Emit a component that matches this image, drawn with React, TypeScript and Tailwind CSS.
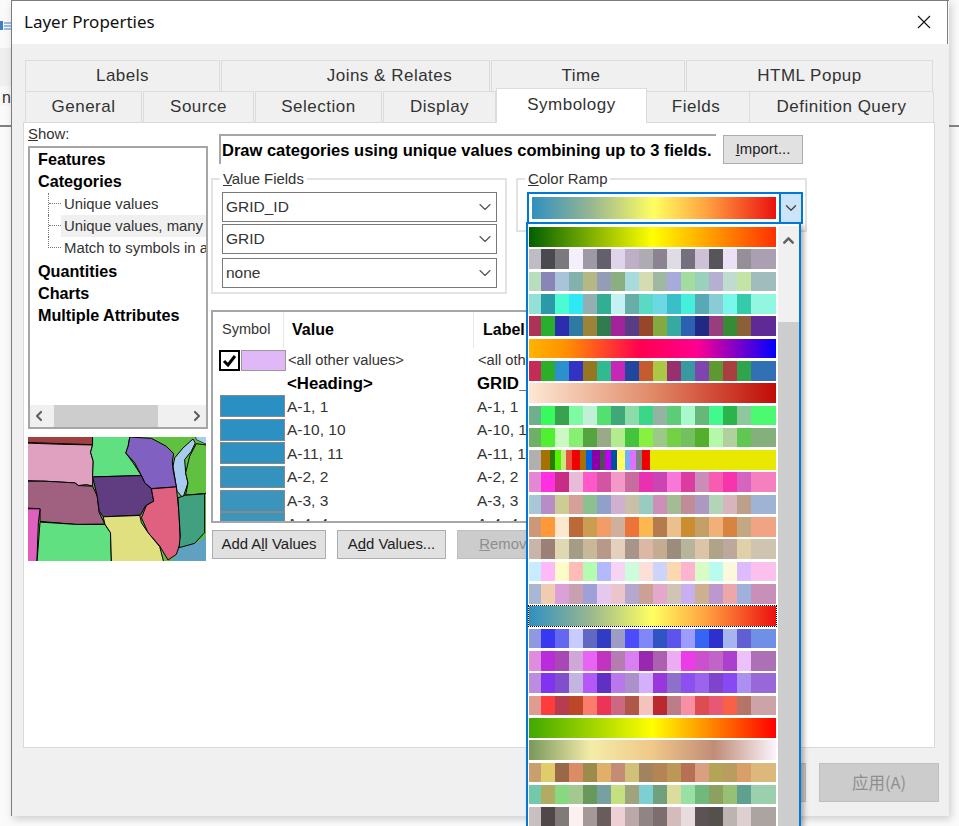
import { ChevronDown, ChevronLeft, ChevronRight, ChevronUp } from "lucide-react";

const ramps: (string[] | string)[] = [
  "linear-gradient(90deg,#006000,#ffff00 50%,#ff3000)",
  ["#c0bcc6","#4b4950","#7b787e","#f4effb","#9f99a5","#635f6b","#e0d4ea","#bdafc5","#aeabb2","#8b8292","#e0dce6","#76707e","#cdc1d6","#57545a","#ece1f4","#958f98","#aaa0b1"],
  ["#b8dfbd","#8985b6","#a9c3da","#83b1ab","#b4b983","#949cb6","#8ab081","#a9dbde","#d6dcb2","#9eb9a0","#a6aadc","#a2dc9e","#9ad1bc","#b5b0d2","#bfdcd0","#c5e2a7","#a1bcbc"],
  ["#93e1d6","#2b9aa8","#4cfbd3","#2ee8f4","#93afb1","#33ae94","#c5f0f4","#68ada8","#5ad9c3","#6bd8e4","#3abfc8","#44f0db","#57aab5","#8accd6","#78f7ea","#33cbaa","#92f7e0"],
  ["#ae3358","#2aae30","#2d2cae","#2e7aa3","#9d823a","#317c4f","#a3239a","#583c84","#96472a","#82aa40","#36a9a0","#2c60b0","#202a84","#983e7e","#368a38","#8a6038","#5f2a96"],
  "linear-gradient(90deg,#ffb400,#ff9000 15%,#ff0050 45%,#ff0090 68%,#0000ff)",
  ["#c42c58","#2cae28","#2c90cc","#3232c4","#96761e","#30ba8e","#c428b4","#2046a0","#c45c30","#aac844","#983070","#369aa0","#8044b0","#5e9830","#aa3e40","#30a44c","#3270b4"],
  "linear-gradient(90deg,#fde8d4,#e08a68 50%,#c00c06)",
  ["#6eb08c","#38fa5e","#38a24e","#7efaa2","#c2f0d6","#52e070","#3ea878","#8cdcaa","#38d888","#92b4a0","#5ccc76","#a8f8cc","#66b878","#40fa8e","#2cb44c","#8cc89c","#4cfa72"],
  ["#6eb068","#50f030","#ccf8c4","#88f070","#54a440","#98aa88","#b2ec8c","#44c43c","#88f040","#9cc888","#74d044","#74c060","#54b02c","#b4f8a8","#b0d0a0","#60c850","#84b07c"],
  "mixed",
  ["#e288d4","#ff30e0","#c82c84","#e8bcd8","#ff58c8","#d454a4","#f498c8","#c86ca0","#e830b0","#cc44b4","#f878d8","#dc3ca0","#cc8cb8","#f85cb0","#f834ac","#d464c0","#f480c0"],
  ["#a8c8d8","#b88cc4","#cccc94","#d4a098","#8cc090","#90a0c8","#d0b0d0","#c8c0a8","#98ccc0","#cc90b8","#a4bc94","#c08c98","#ac98c0","#b4d4b8","#d8b4bc","#bca08c","#9fb4d4"],
  ["#cc9878","#ff9838","#fce8cc","#bc6838","#cc9c50","#f49c68","#d0b09c","#ec7438","#fcb850","#b47c4c","#ecc08c","#cc8c30","#c4a068","#f0b078","#d88440","#c4a884","#f0a484"],
  ["#c8b4a8","#9c8078","#e0d8b0","#a49c84","#c8b898","#b89888","#e4d0bc","#a89488","#dcb8a4","#c4ac90","#9c8c7c","#b8b49c","#dcc4a8","#b0a488","#bca89c","#e0d0a8","#cec4b0"],
  ["#c8ecff","#ffb8f8","#fcfcc8","#ffbcb4","#b4fcb0","#b4b8fc","#f8d4f4","#ccfcdc","#fce0d8","#ccd4fc","#fcd8b0","#fcb4d0","#d8fcc4","#b8fcf0","#fcf8dc","#dcbcfc","#fcc0ec"],
  ["#a8b8d4","#f0ccb0","#dca0d8","#c8a0b0","#a0a0d8","#e4c8f0","#ecc4cc","#b4a8cc","#cca094","#e4a8cc","#d0c4b4","#c8b0f0","#ccb090","#bc98cc","#eca8a8","#a0b0dc","#c890b8"],
  "selected",
  ["#9098e4","#3838f0","#6468f0","#c8ccfc","#6068c4","#303cc4","#9c9cc4","#4c4cfc","#8088f8","#3054c4","#5c54ec","#9c9cfc","#3864f4","#2c30cc","#a8b4f0","#6060d4","#7090e8"],
  ["#e08cdc","#b82cdc","#a848b4","#d0a8d8","#e864f4","#c034c0","#b47cb0","#d880f0","#9828b0","#ac60b0","#ecacf4","#ec3ce8","#cc50cc","#c064c8","#ac40cc","#ecc0f8","#ac70b4"],
  ["#bc8ce0","#8034f0","#8050cc","#c4b4e0","#b458f8","#6030c4","#b878ec","#ac90cc","#d4b0fc","#9838dc","#8c70cc","#8c50f0","#9c64ec","#8044cc","#8848f4","#ac90f0","#9868d8"],
  ["#e09c90","#ff3c3c","#b83c50","#bc4828","#fc7c6c","#ec3454","#cc6880","#b05848","#f4c4bc","#bc2830","#bc7c88","#f890a4","#dc4c50","#e85874","#f86048","#b47468","#cca4a8"],
  "linear-gradient(90deg,#40a800,#ffff00 50%,#ff0000)",
  "linear-gradient(90deg,#78985c,#f4eca8 25%,#f0c888 50%,#c08c78 75%,#fcf4fc)",
  ["#c8a070","#e0cc68","#986848","#dc8c64","#9c8c4c","#e0b068","#c48c74","#d0c078","#a08460","#b48454","#bc9858","#b87054","#d8a080","#b4a458","#b89c60","#d8a068","#dcb87c"],
  ["#74c8ac","#b0ac64","#88d880","#a4c890","#68985c","#78a0a0","#c4e080","#a0a47c","#7cd0d4","#70a07c","#dcdc9c","#98e0a4","#70b87c","#8ca060","#98c074","#60a090","#9cd0ac"],
  ["#c8c0c0","#504848","#807a78","#fcf0f0","#a49898","#685c5c","#ecd0d4","#bca8a8","#908484","#7c6e6e","#d4bcbc","#e8dcdc","#5c5454","#54504c","#bcb4b0","#ded0d0","#aca4a0"],
];

const mixed: [string, number][] = [
  ["#b0b0b0",37],["#a87000",25],["#2a7c00",17],["#54f000",17],["#c8e880",16],["#e85040",17],["#f00000",25],["#a87000",16],["#0060e0",18],["#8c00a8",25],["#505050",16],["#c000f0",17],["#0050a8",17],["#ffff60",25],["#70b0ff",16],["#e070ff",17],["#808080",17],["#f00000",25],["#e8e800",377],
];

const selectedGradient = "linear-gradient(90deg,#3090c0,#9ab890 25%,#ffff60 50%,#ffa040 72%,#ec1010)";

const blues = ["#2a90c4", "#2c90c3", "#2f91c2", "#3492bf", "#3a94bc", "#3e95ba"];
const tableRows = ["A-1, 1", "A-10, 10", "A-11, 11", "A-2, 2", "A-3, 3"];

function Ramp({ ramp }: { ramp: string[] | string }) {
  if (ramp === "mixed") {
    return (
      <div className="flex h-[19.67px]">
        {mixed.map(([c, g], i) => (
          <div key={i} style={{ background: c, flexGrow: g, flexBasis: 0 }} />
        ))}
      </div>
    );
  }
  if (ramp === "selected") {
    return <div className="h-[19.67px] outline-1 outline-dotted outline-black" style={{ background: selectedGradient }} />;
  }
  if (typeof ramp === "string") {
    return <div className="h-[19.67px]" style={{ background: ramp }} />;
  }
  return (
    <div className="grid h-[19.67px] grid-cols-[12.3px_repeat(15,14px)_25px]">
      {ramp.map((c, i) => (
        <div key={i} style={{ background: c }} />
      ))}
    </div>
  );
}

function Select({ value }: { value: string }) {
  return (
    <div className="flex h-[30px] w-[275px] items-center justify-between border-[1.5px] border-[#7a7a7a] bg-white pl-[3px] pr-[1px] text-[15.5px] text-[#333]">
      <span>{value}</span>
      <ChevronDown size={20} strokeWidth={1.4} className="text-[#555]" />
    </div>
  );
}

function Btn({ w, disabled, children }: { w: string; disabled?: boolean; children: React.ReactNode }) {
  return (
    <div className={`flex h-[29px] shrink-0 items-center justify-center border-[1.5px] text-[14.9px] ${w} ${disabled ? "border-[#bfbfbf] bg-[#cccccc] text-[#8f8f8f]" : "border-[#adadad] bg-[#e1e1e1] text-[#222]"}`}>
      {children}
    </div>
  );
}

function Tab({ w, extra, children }: { w: string; extra?: string; children: React.ReactNode }) {
  return (
    <div className={`flex shrink-0 items-center justify-center border-x border-t border-[#dcdcdc] text-[17px] tracking-[0.5px] ${w} ${extra ?? ""}`}>
      {children}
    </div>
  );
}

function TreeChild({ label, last, active }: { label: string; last?: boolean; active?: boolean }) {
  return (
    <div className="flex h-[22.33px] pl-[18px]">
      <div className={`w-[13px] shrink-0 ${last ? "" : "border-l border-dotted border-[#777]"}`}>
        <div className={`h-1/2 w-full border-b border-dotted border-[#777] ${last ? "border-l" : ""}`} />
      </div>
      <div className={`flex min-w-0 flex-1 items-center overflow-hidden whitespace-nowrap pl-[3px] text-[14.9px] text-[#333] ${active ? "bg-[#f0f0f0]" : ""}`}>{label}</div>
    </div>
  );
}

function TreeHead({ label }: { label: string }) {
  return <div className="flex h-[22.33px] items-center pl-[8px] text-[16.2px] font-bold text-black">{label}</div>;
}

function UsMap() {
  return (
    <svg viewBox="24 22 535 373" className="mt-[8px] block h-[124px] w-[178px]" stroke="#000" strokeWidth="3" strokeLinejoin="round">
      <rect x="24" y="22" width="535" height="373" fill="#60c040" stroke="none" />
      <path d="M525 10L575 10L575 45L556 42L530 30Z" fill="#a8ccf0" strokeWidth="2" />
      <path d="M520 28L527 40L515 65L495 90L498 130L505 160L490 205L472 185L460 110L465 85L490 55Z" fill="#a8ccf0" />
      <path d="M10 10L218 10L218 45L125 42L10 38Z" fill="#a04040" />
      <path d="M10 40L125 44L218 46L212 68L220 95L218 170L200 165L175 168L165 160L75 155L10 153Z" fill="#e0a0c0" />
      <path d="M218 10L332 10L325 50L318 70L340 100L365 138L218 142L220 95L212 68L218 46Z" fill="#60e080" />
      <path d="M330 22L395 26L440 50L462 72L458 95L460 120L470 172L395 177L375 160L365 138L345 100L318 70L325 50Z" fill="#8060c0" />
      <path d="M575 190L498 197L505 160L498 130L510 80L530 42L575 48Z" fill="#60c040" />
      <path d="M10 155L75 155L165 160L175 168L218 170L232 200L238 250L255 284L170 285L60 276L60 238L10 235Z" fill="#a06080" />
      <path d="M218 142L365 138L375 160L395 178L402 215L378 228L362 257L250 262L238 245L232 200Z" fill="#603c80" />
      <path d="M575 310L575 410L445 410L470 375L480 355L530 340Z" fill="#60a0c0" stroke="none" />
      <path d="M395 178L470 172L478 250L482 340L470 375L445 392L420 350L385 310L365 265L380 228L402 215Z" fill="#e06080" />
      <path d="M475 205L498 197L555 193L555 310L525 342L478 355L482 320Z" fill="#40a080" />
      <path d="M10 238L60 238L55 280L50 410L10 410Z" fill="#e060c0" />
      <path d="M60 278L170 285L255 285L272 310L275 410L50 410Z" fill="#60e080" />
      <path d="M250 262L360 258L365 280L385 310L420 352L435 410L275 410L272 310L255 284Z" fill="#e0e080" />
    </svg>
  );
}

export default function App() {
  return (
    <div className="flex h-[826px] w-[959px] overflow-hidden bg-[#fafafa] font-['Liberation_Sans',sans-serif]">
      <div className="flex h-[127px] w-[11px] shrink-0 flex-col border-b-2 border-[#808080]">
        <div className="h-[19px]" />
        <div className="h-[16px] overflow-hidden">
          <svg width="11" height="16" viewBox="0 0 11 16">
            <rect x="0" y="2" width="3" height="9" fill="#3d7fc9" />
            <path d="M4 4H11M4 7H11M4 10H11" stroke="#3d7fc9" strokeWidth="1.2" />
          </svg>
        </div>
        <div className="h-[13px]" />
        <div className="h-[38px] bg-[#efefef]" />
        <div className="flex h-[20px] justify-end overflow-hidden bg-[#f6f6f6] text-[16px] leading-[24px] text-[#333]">n</div>
      </div>

      <div className="h-[816px] w-[938px] shrink-0 border-l border-t border-[#7c7c7c] shadow-[2px_3px_8px_rgba(0,0,0,0.18)]">
        <div className="flex h-[43px] w-[936px] items-center justify-between border-r border-[#7c7c7c] bg-white pb-[2px] pl-[12px] pr-[16px]">
          <span className="font-['Noto_Sans',sans-serif] text-[17px] text-[#111]">Layer Properties</span>
          <svg width="14" height="14" viewBox="0 0 14 14" stroke="#111" strokeWidth="1.1">
            <path d="M1 1L13 13M13 1L1 13" />
          </svg>
        </div>

        <div className="h-[772px] bg-[#f0f0f0] pl-[11px] pt-[16px]">
          <div className="ml-[2px] flex h-[31px] gap-[1px] text-[#333]">
            <Tab w="w-[195px]">Labels</Tab>
            <Tab w="w-[269px]" extra="pl-[68px]">Joins &amp; Relates</Tab>
            <Tab w="w-[194px]" extra="pr-[14px]">Time</Tab>
            <Tab w="w-[247px]">HTML Popup</Tab>
          </div>
          <div className="relative z-10 ml-[2px] flex h-[31px] text-[#333]">
            <Tab w="w-[117px]" extra="mr-[1px]">General</Tab>
            <Tab w="w-[111px]" extra="mr-[1px]">Source</Tab>
            <Tab w="w-[127px]" extra="mr-[1px]">Selection</Tab>
            <Tab w="w-[113px]" extra="">Display</Tab>
            <Tab w="w-[151px]" extra="-mt-[3px] h-[35px] bg-white pb-[3px]">Symbology</Tab>
            <Tab w="w-[103px]" extra="border-l-0 pr-[4px]">Fields</Tab>
            <Tab w="w-[184px]" extra="border-l-0">Definition Query</Tab>
          </div>

          <div className="flex h-[626px] w-[912px] border border-[#d9d9d9] bg-white pl-[4px]">
            <div className="w-[180px] shrink-0">
              <div className="flex h-[23px] items-center text-[14.9px] text-[#333]"><span><u>S</u>how:</span></div>
              <div className="flex h-[283px] flex-col border-2 border-[#a6a6a6]">
                <div className="flex-1">
                  <TreeHead label="Features" />
                  <TreeHead label="Categories" />
                  <TreeChild label="Unique values" />
                  <TreeChild label="Unique values, many" active />
                  <TreeChild label="Match to symbols in a" last />
                  <TreeHead label="Quantities" />
                  <TreeHead label="Charts" />
                  <TreeHead label="Multiple Attributes" />
                </div>
                <div className="flex h-[22px] items-center justify-between bg-[#f0f0f0] px-[1px] text-[#606060]">
                  <ChevronLeft size={16} strokeWidth={3.2} />
                  <div className="ml-[7px] mr-auto h-full w-[104px] bg-[#cdcdcd]" />
                  <ChevronRight size={16} strokeWidth={3.2} />
                </div>
              </div>
              <UsMap />
            </div>

            <div className="ml-[3px] flex-1">
              <div className="ml-[8px] mt-[11px] flex">
                <div className="flex h-[30px] w-[497px] items-center overflow-hidden whitespace-nowrap border-l-2 border-t-2 border-[#a6a6a6] pl-[1px] text-[16.5px] font-bold text-black">Draw categories using unique values combining up to 3 fields.</div>
                <div className="ml-[7px] mt-[1px]"><Btn w="w-[80px]"><span><u>I</u>mport...</span></Btn></div>
              </div>
              <div className="mt-[7px] flex">
                <fieldset className="h-[123px] w-[296px] border-2 border-[#e3e3e3] pl-[9px] pt-[5px]">
                  <legend className="-ml-[2px] h-[16px] px-[3px] text-[14.9px] leading-[16px] text-[#333]"><u>V</u>alue Fields</legend>
                  <div className="flex flex-col gap-[2px]">
                    <Select value="GRID_ID" />
                    <Select value="GRID" />
                    <div className="mt-[2px]"><Select value="none" /></div>
                  </div>
                </fieldset>
                <fieldset className="ml-[9px] h-[61px] w-[291px] border-2 border-[#e3e3e3] pl-[9px] pt-[5px]">
                  <legend className="-ml-[2px] h-[16px] px-[3px] text-[14.9px] leading-[16px] text-[#333]"><u>C</u>olor Ramp</legend>
                  <div className="relative flex h-[32px] w-[276px] border-2 border-[#0078d7] bg-white">
                    <div className="m-[3px] flex-1" style={{ background: selectedGradient }} />
                    <div className="flex w-[22px] items-center justify-center border-l-2 border-[#0078d7] bg-[#cce4f7] text-[#444]">
                      <ChevronDown size={18} strokeWidth={1.8} />
                    </div>
                    <div className="absolute left-[-3px] top-[28px] z-20 h-[610px] w-[275px] border-2 border-[#0078d7] bg-white pt-[2px] shadow-[3px_3px_5px_rgba(0,0,0,0.3)]">
                      <div className="flex h-full">
                        <div className="flex w-[248px] shrink-0 flex-col gap-[2.66px] pl-[1px] pt-[1px]">
                          {ramps.map((r, i) => (
                            <Ramp key={i} ramp={r} />
                          ))}
                        </div>
                        <div className="ml-[2px] flex w-[21px] shrink-0 flex-col bg-[#f0f0f0]">
                          <div className="flex h-[28px] items-center justify-center text-[#606060]">
                            <ChevronUp size={17} strokeWidth={3.4} />
                          </div>
                          <div className="h-[68px]" />
                          <div className="flex-1 bg-[#cdcdcd]" />
                        </div>
                      </div>
                    </div>
                  </div>
                </fieldset>
              </div>

              <div className="mt-[16px] h-[213px] w-[320px] overflow-hidden border-2 border-[#a6a6a6] text-[#333]">
                <div className="flex h-[36px] items-center">
                  <div className="flex h-full w-[70px] items-center pl-[9px] text-[14.5px]">Symbol</div>
                  <div className="flex h-full w-[190px] items-center border-l border-[#e8e8e8] pl-[8px] text-[16px] font-bold text-black">Value</div>
                  <div className="flex h-full items-center whitespace-nowrap border-l border-[#e8e8e8] pl-[9px] text-[16px] font-bold text-black">Label</div>
                </div>
                <div className="flex h-[24px] items-center text-[14.7px]">
                  <div className="ml-[6px] flex h-[21px] w-[21px] shrink-0 items-center justify-center border-2 border-black">
                    <svg width="15" height="13" viewBox="0 0 15 13" fill="none" stroke="#000" strokeWidth="3">
                      <path d="M2 7L6 11L13 2" />
                    </svg>
                  </div>
                  <div className="ml-[1px] h-[21px] w-[45px] shrink-0 border border-[#9a9a9a] bg-[#e0b8f8]" />
                  <div className="ml-[2px] w-[190px] shrink-0">&lt;all other values&gt;</div>
                  <div className="whitespace-nowrap">&lt;all other values&gt;</div>
                </div>
                <div className="flex h-[22.5px] items-center text-[16.8px] font-bold text-black">
                  <div className="ml-[74px] w-[190px] shrink-0">&lt;Heading&gt;</div>
                  <div>GRID_ID</div>
                </div>
                {tableRows.map((t, i) => (
                  <div key={t} className="flex h-[23.6px] items-center text-[15.5px]">
                    <div className="ml-[7px] h-[22px] w-[65px] shrink-0 border border-[#888]" style={{ background: blues[i] }} />
                    <div className="ml-[2px] w-[190px] shrink-0">{t}</div>
                    <div className="whitespace-nowrap">{t}</div>
                  </div>
                ))}
                <div className="flex h-[23.6px] text-[15.5px]">
                  <div className="ml-[7px] h-[22px] w-[65px] shrink-0 border border-[#888]" style={{ background: blues[5] }} />
                  <div className="ml-[2px] w-[190px] shrink-0">A-4, 4</div>
                  <div>A-4, 4</div>
                </div>
              </div>

              <div className="ml-[1px] mt-[7px] flex gap-[11px]">
                <Btn w="w-[114px]"><span>Add A<u>l</u>l Values</span></Btn>
                <Btn w="w-[109px]"><span>A<u>d</u>d Values...</span></Btn>
                <Btn w="w-[100px]" disabled><span><u>R</u>emove</span></Btn>
              </div>
            </div>
          </div>

          <div className="mt-[15px] flex justify-end gap-[13px] pr-[10px]">
            <div className="h-[39px] w-[120px] border border-[#bfbfbf] bg-[#cccccc]" />
            <div className="flex h-[39px] w-[120px] items-center justify-center border border-[#bfbfbf] bg-[#cccccc] font-['Noto_Sans_CJK_SC','Noto_Sans',sans-serif] text-[16.5px] text-[#8f8f8f]">应用(A)</div>
          </div>
        </div>
      </div>

      <div className="flex h-[127px] flex-1 flex-col justify-end border-b-2 border-[#808080]" />
    </div>
  );
}
